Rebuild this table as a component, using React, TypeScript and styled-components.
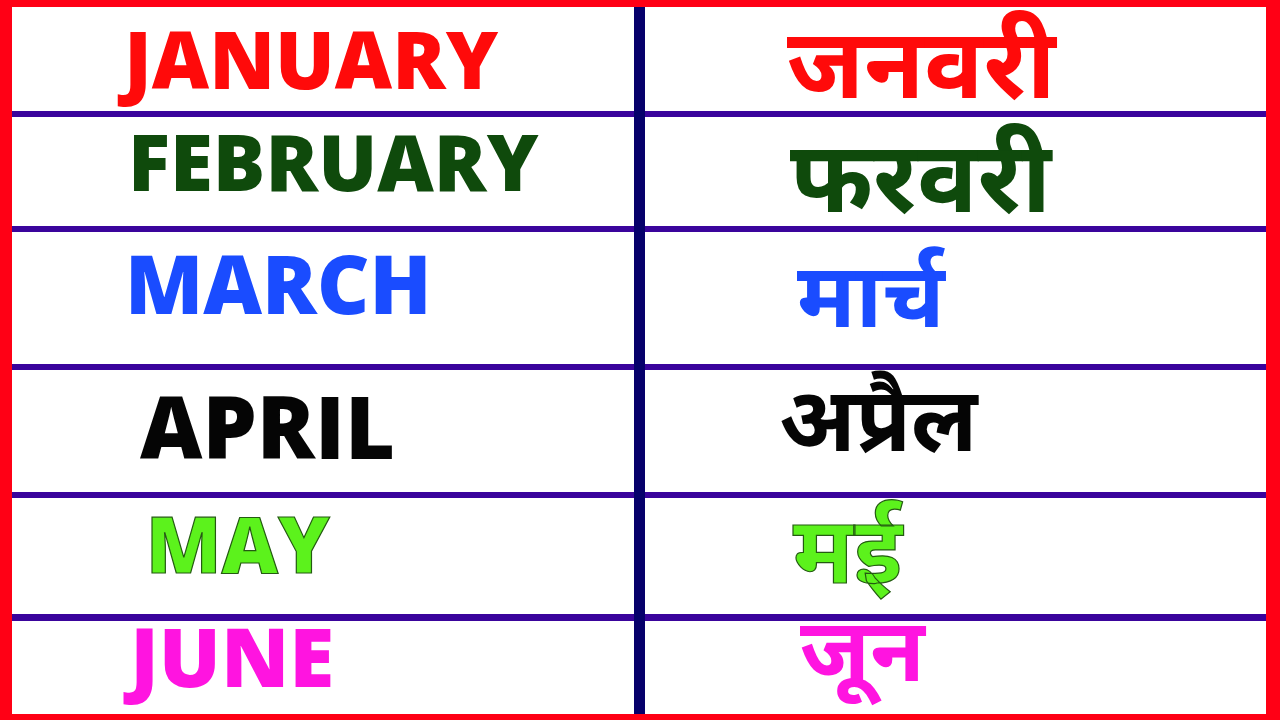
import { createGlobalStyle, styled } from 'styled-components'

const GlobalStyle = createGlobalStyle`
	html, body {
		margin: 0;
		padding: 0;
		background: #ffffff;
	}
	#root {
		width: 1280px;
		height: 720px;
	}
`

const Frame = styled.div`
	box-sizing: border-box;
	width: 1280px;
	height: 720px;
	border-style: solid;
	border-color: #ff0015;
	border-width: 7px 14px 6px 12px;
	background: #ffffff;
	display: grid;
	grid-template-columns: 622px 11px 1fr;
	grid-template-rows: 104px 6px 109px 6px 132px 6px 122px 6px 116px 7px 93px;
	overflow: hidden;
`

const Divider = styled.div`
	grid-column: 2;
	grid-row: 1 / -1;
	background: #06006b;
	z-index: 1;
`

const Rule = styled.div<{ $row: number }>`
	grid-column: 1 / -1;
	grid-row: ${p => p.$row};
	background: #3a049c;
`

const Cell = styled.div<{ $row: number; $col: number; $x: number }>`
	grid-column: ${p => p.$col};
	grid-row: ${p => p.$row};
	display: flex;
	align-items: flex-start;
	padding-left: ${p => p.$x}px;
	min-width: 0;
	min-height: 0;
`

const English = styled.span<{ $color: string; $size: number; $y: number; $stroke?: string }>`
	display: block;
	margin-top: ${p => p.$y}px;
	font-family: "Open Sans", "Noto Sans", sans-serif;
	font-weight: 800;
	font-size: ${p => p.$size}px;
	line-height: 1;
	color: ${p => p.$color};
	-webkit-text-stroke: ${p => (p.$stroke ? `1.2px ${p.$stroke}` : '0')};
	white-space: nowrap;
`

// line-height under 1 keeps the tall matras from pushing the box into the next row
const Hindi = styled.span<{ $color: string; $size: number; $y: number; $stroke?: string }>`
	display: block;
	margin-top: ${p => p.$y + p.$size * 0.1}px;
	font-family: "Noto Sans Devanagari", "Noto Sans", sans-serif;
	font-weight: 700;
	font-size: ${p => p.$size}px;
	line-height: 0.8;
	color: ${p => p.$color};
	-webkit-text-stroke: ${p => (p.$stroke ? `1.2px ${p.$stroke}` : '0')};
	white-space: nowrap;
`

type Month = {
	en: string;
	hi: string;
	color: string;
	stroke?: string;
	enX: number;
	enY: number;
	enSize: number;
	hiX: number;
	hiY: number;
	hiSize: number;
}

const months: Month[] = [
	{ en: 'JANUARY', hi: 'जनवरी', color: '#ff0a0a', enX: 112, enY: 12, enSize: 79, hiX: 142, hiY: 18, hiSize: 98 },
	{ en: 'FEBRUARY', hi: 'फरवरी', color: '#0f4a0c', enX: 116, enY: 5, enSize: 78, hiX: 145, hiY: 21, hiSize: 100 },
	{ en: 'MARCH', hi: 'मार्च', color: '#1a4cff', enX: 113, enY: 10, enSize: 81, hiX: 152, hiY: 28, hiSize: 90 },
	{ en: 'APRIL', hi: 'अप्रैल', color: '#050505', enX: 128, enY: 13, enSize: 86, hiX: 134, hiY: 14, hiSize: 90 },
	{ en: 'MAY', hi: 'मई', color: '#5cf21c', stroke: '#245a12', enX: 134, enY: 6, enSize: 78, hiX: 148, hiY: 17, hiSize: 93 },
	{ en: 'JUNE', hi: 'जून', color: '#ff14e0', enX: 118, enY: -7, enSize: 82, hiX: 155, hiY: -6, hiSize: 89 },
]

export default function App() {
	return (
		<>
			<GlobalStyle />
			<Frame>
				<Divider />
				{months.map((m, i) => (
					<Cell key={m.en} $row={i * 2 + 1} $col={1} $x={m.enX}>
						<English $color={m.color} $size={m.enSize} $y={m.enY} $stroke={m.stroke}>{m.en}</English>
					</Cell>
				))}
				{months.map((m, i) => (
					<Cell key={m.hi} $row={i * 2 + 1} $col={3} $x={m.hiX}>
						<Hindi $color={m.color} $size={m.hiSize} $y={m.hiY} $stroke={m.stroke}>{m.hi}</Hindi>
					</Cell>
				))}
				{months.slice(1).map((m, i) => (
					<Rule key={'rule-' + m.en} $row={i * 2 + 2} />
				))}
			</Frame>
		</>
	)
}
